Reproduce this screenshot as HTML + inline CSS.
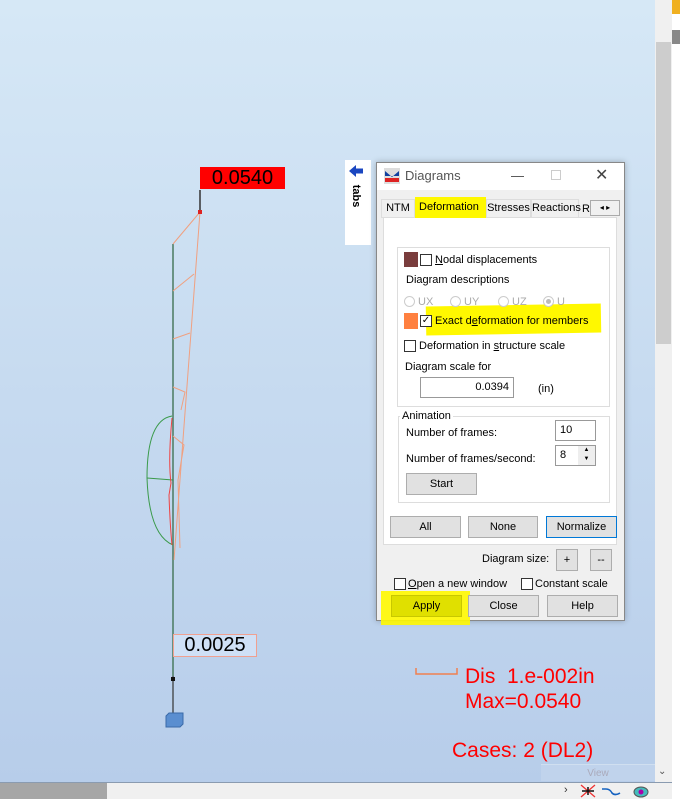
<!DOCTYPE html>
<html><head><style>
*{box-sizing:border-box;margin:0;padding:0}
body{width:680px;height:799px;position:relative;overflow:hidden;font-family:"Liberation Sans",sans-serif;font-size:11px;color:#000;background:#fff}
.a{position:absolute}
.vp{left:0;top:0;width:655px;height:782px;background:linear-gradient(#d6e8f6,#b7cdea)}
.btn{position:absolute;background:#e1e1e1;border:1px solid #adadad;text-align:center;font-size:11px}
.cb{position:absolute;width:12px;height:12px;border:1px solid #333;background:#fff}
.rd{position:absolute;width:11px;height:11px;border:1px solid #ccc;border-radius:50%;background:#fff;z-index:2}
.g{color:#aaa;z-index:2}
</style></head><body>
<div class="a vp"></div>
<div class="a" style="left:655px;top:0;width:17px;height:782px;background:#f0f0f0"></div>
<div class="a" style="left:656px;top:42px;width:15px;height:302px;background:#cdcdcd"></div>
<div class="a" style="left:672px;top:0;width:8px;height:799px;background:#fff"></div>
<div class="a" style="left:672px;top:0;width:8px;height:14px;background:#f0b020"></div>
<div class="a" style="left:672px;top:30px;width:8px;height:14px;background:#888"></div>
<div class="a" style="left:658px;top:766px;font-size:10px;color:#555">⌄</div>
<div class="a" style="left:0;top:782px;width:672px;height:17px;background:#f0f0f0;border-top:1px solid #8a9bb0"></div>
<div class="a" style="left:0;top:783px;width:107px;height:16px;background:#a6a6a6"></div>
<div class="a" style="left:564px;top:784px;font-size:11px;color:#333">›</div>
<div class="a" style="left:541px;top:764px;width:114px;height:17px;background:#c0d3ec;border-top:1px solid #d0dff0;color:#aab;font-size:10px;text-align:center;line-height:17px">View</div>
<svg class="a" style="left:578px;top:783px" width="80" height="16">
<path d="M3 2 L17 14 M17 2 L3 14" stroke="#e33" stroke-width="1.3"/>
<path d="M4 8 H16 M10 4 v8" stroke="#111" stroke-width="1.5"/>
<path d="M24 6 h4 q4 0 6 4 q3 3 8 0" stroke="#1562c0" fill="none" stroke-width="1.6"/>
<ellipse cx="63" cy="9" rx="7" ry="5" fill="#4bb" stroke="#555"/>
<circle cx="63" cy="9" r="2.5" fill="#a0a"/>
</svg>
<svg class="a" style="left:0;top:0" width="655" height="782">
<path d="M173 244 V676" stroke="#4a7a60" stroke-width="1.5"/>
<path d="M173 676 V715" stroke="#333" stroke-width="1.2"/>
<path d="M200 190 V212" stroke="#333" stroke-width="1.5"/>
<path d="M200 212 L173 244 M200 212 L174 560 M173 291 L194 274 M173 339 L190 333 M173 387 L185 392 L181 410 M173 436 L184 445 L178 480 L180 548" stroke="#f0a080" fill="none" stroke-width="1"/>
<rect x="198" y="210" width="4" height="4" fill="#d22"/>
<path d="M172 416 Q147 420 147 478 Q149 535 173 545" stroke="#3a9a4a" fill="none" stroke-width="1"/>
<path d="M147 478 L173 480" stroke="#3a9a4a" stroke-width="1"/>
<path d="M172 418 Q168 460 171 483 L169 495 Q170 525 172 545" stroke="#e44" fill="none" stroke-width="1"/>
<rect x="171" y="677" width="4" height="4" fill="#111"/>
<path d="M166 716 l3-3 h14 v11 l-3 3 h-14z" fill="#5a8ed0" stroke="#3a6aa8"/>
<path d="M416 668 v6 h41 v-6" stroke="#f08050" fill="none" stroke-width="1.5"/>
</svg>
<div class="a" style="left:200px;top:167px;width:85px;height:22px;background:#f00;font-size:20px;line-height:22px;text-align:center">0.0540</div>
<div class="a" style="left:173px;top:634px;width:84px;height:23px;background:#cfe0f6;border:1px solid #f0a090;font-size:20px;line-height:21px;text-align:center">0.0025</div>
<div class="a" style="left:465px;top:664px;color:#f00;font-size:21px;line-height:25px">Dis&nbsp; 1.e-002in<br>Max=0.0540</div>
<div class="a" style="left:452px;top:738px;color:#f00;font-size:21px;line-height:25px">Cases: 2 (DL2)</div>
<div class="a" style="left:345px;top:160px;width:26px;height:85px;background:#fff"></div>
<svg class="a" style="left:348px;top:164px" width="16" height="14"><path d="M1 7 L8 1 V4.5 H15 V9.5 H8 V13z" fill="#1a46c0"/></svg>
<div class="a" style="left:341px;top:190px;transform:rotate(90deg);font-weight:bold;font-size:11px;width:30px;text-align:center">tabs</div>
<div class="a" style="left:376px;top:162px;width:249px;height:459px;background:#f0f0f0;border:1px solid #888;box-shadow:0 0 6px rgba(0,0,0,.25)"></div>
<div class="a" style="left:377px;top:163px;width:247px;height:27px;background:#fff"></div>
<svg class="a" style="left:384px;top:168px" width="16" height="16"><rect width="16" height="16" fill="#ddd"/><path d="M1 3 L8 9 L15 3 V8 H1z" fill="#1040a0"/><path d="M1 10 H15 V14 H1z" fill="#d22"/></svg>
<div class="a" style="left:405px;top:168px;font-size:13px;color:#555">Diagrams</div>
<div class="a" style="left:511px;top:168px;font-size:13px;color:#444">—</div>
<div class="a" style="left:551px;top:170px;width:10px;height:10px;border:1px solid #ccc"></div>
<div class="a" style="left:595px;top:165px;font-size:16px;color:#444">✕</div>
<div class="a" style="left:381px;top:199px;width:236px;height:19px;border-bottom:1px solid #ddd"></div>
<div class="a" style="left:381px;top:199px;width:34px;height:19px;background:#f0f0f0;border:1px solid #ddd;line-height:17px;text-align:center">NTM</div>
<div class="a" style="left:415px;top:197px;width:71px;height:31px;background:#fff800"></div>
<div class="a" style="left:419px;top:201px;font-size:11px">Deformation</div>
<div class="a" style="left:486px;top:199px;width:45px;height:19px;border:1px solid #ddd;line-height:17px;text-align:center">Stresses</div>
<div class="a" style="left:531px;top:199px;width:48px;height:19px;border:1px solid #ddd;line-height:17px;text-align:center">Reactions</div>
<div class="a" style="left:582px;top:203px">R</div>
<div class="a" style="left:590px;top:200px;width:30px;height:16px;background:#f0f0f0;border:1px solid #aaa;font-size:8px;line-height:14px;text-align:center">◂ ▸</div>
<div class="a" style="left:383px;top:218px;width:234px;height:327px;background:#fff;border:1px solid #ddd;border-top:none"></div>
<div class="a" style="left:486px;top:218px;width:130px;height:10px;background:#fff"></div>
<div class="a" style="left:397px;top:247px;width:213px;height:160px;border:1px solid #ddd"></div>
<div class="a" style="left:404px;top:252px;width:14px;height:15px;background:#7a3d3d"></div>
<div class="cb" style="left:420px;top:254px"></div>
<div class="a" style="left:435px;top:254px"><u>N</u>odal displacements</div>
<div class="a" style="left:406px;top:274px">Diagram descriptions</div>
<div class="a" style="left:426px;top:305px;width:175px;height:29px;background:#fff800;transform:rotate(-1deg)"></div>
<div class="rd" style="left:404px;top:296px"></div><div class="a g" style="left:418px;top:296px">UX</div>
<div class="rd" style="left:450px;top:296px"></div><div class="a g" style="left:464px;top:296px">UY</div>
<div class="rd" style="left:498px;top:296px"></div><div class="a g" style="left:512px;top:296px">UZ</div>
<div class="rd" style="left:543px;top:296px"></div><div class="a" style="left:546px;top:299px;width:5px;height:5px;border-radius:50%;background:#bbb;z-index:3"></div><div class="a g" style="left:557px;top:296px">U</div>
<div class="a" style="left:404px;top:313px;width:14px;height:16px;background:#ff8040"></div>
<div class="cb" style="left:420px;top:315px;font-size:10px;line-height:10px;text-align:center">✓</div>
<div class="a" style="left:435px;top:315px">Exact d<u>e</u>formation for members</div>
<div class="cb" style="left:404px;top:340px"></div>
<div class="a" style="left:419px;top:340px">Deformation in <u>s</u>tructure scale</div>
<div class="a" style="left:405px;top:361px">Diagram scale for</div>
<div class="a" style="left:420px;top:377px;width:94px;height:21px;border:1px solid #999;text-align:right;padding:3px 4px">0.0394</div>
<div class="a" style="left:538px;top:383px">(in)</div>
<div class="a" style="left:398px;top:416px;width:212px;height:87px;border:1px solid #ddd"></div>
<div class="a" style="left:400px;top:410px;background:#fff;padding:0 2px">Animation</div>
<div class="a" style="left:406px;top:427px">Number of frames:</div>
<div class="a" style="left:555px;top:420px;width:41px;height:21px;border:1px solid #999;padding:3px 4px">10</div>
<div class="a" style="left:406px;top:453px">Number of frames/second:</div>
<div class="a" style="left:555px;top:445px;width:41px;height:21px;border:1px solid #999;padding:3px 4px">8</div>
<div class="a" style="left:578px;top:446px;width:17px;height:19px;background:#eee;font-size:6px;line-height:9px;text-align:center">▲<br>▼</div>
<div class="btn" style="left:406px;top:473px;width:71px;height:22px;line-height:20px">Start</div>
<div class="btn" style="left:390px;top:516px;width:71px;height:22px;line-height:20px">All</div>
<div class="btn" style="left:468px;top:516px;width:70px;height:22px;line-height:20px">None</div>
<div class="btn" style="left:546px;top:516px;width:71px;height:22px;line-height:20px;border:1px solid #0078d7">Normalize</div>
<div class="a" style="left:482px;top:553px">Diagram size:</div>
<div class="btn" style="left:556px;top:549px;width:22px;height:22px;line-height:20px">+</div>
<div class="btn" style="left:590px;top:549px;width:22px;height:22px;line-height:20px">--</div>
<div class="cb" style="left:394px;top:578px"></div>
<div class="a" style="left:408px;top:578px"><u>O</u>pen a new window</div>
<div class="cb" style="left:521px;top:578px"></div>
<div class="a" style="left:535px;top:578px">Constant scale</div>
<div class="a" style="left:381px;top:591px;width:89px;height:34px;background:#fff800;opacity:.9"></div>
<div class="btn" style="left:391px;top:595px;width:71px;height:22px;line-height:20px;background:#e0e000;border-color:#c8c800">Apply</div>
<div class="btn" style="left:468px;top:595px;width:71px;height:22px;line-height:20px">Close</div>
<div class="btn" style="left:547px;top:595px;width:71px;height:22px;line-height:20px">Help</div>
</body></html>
